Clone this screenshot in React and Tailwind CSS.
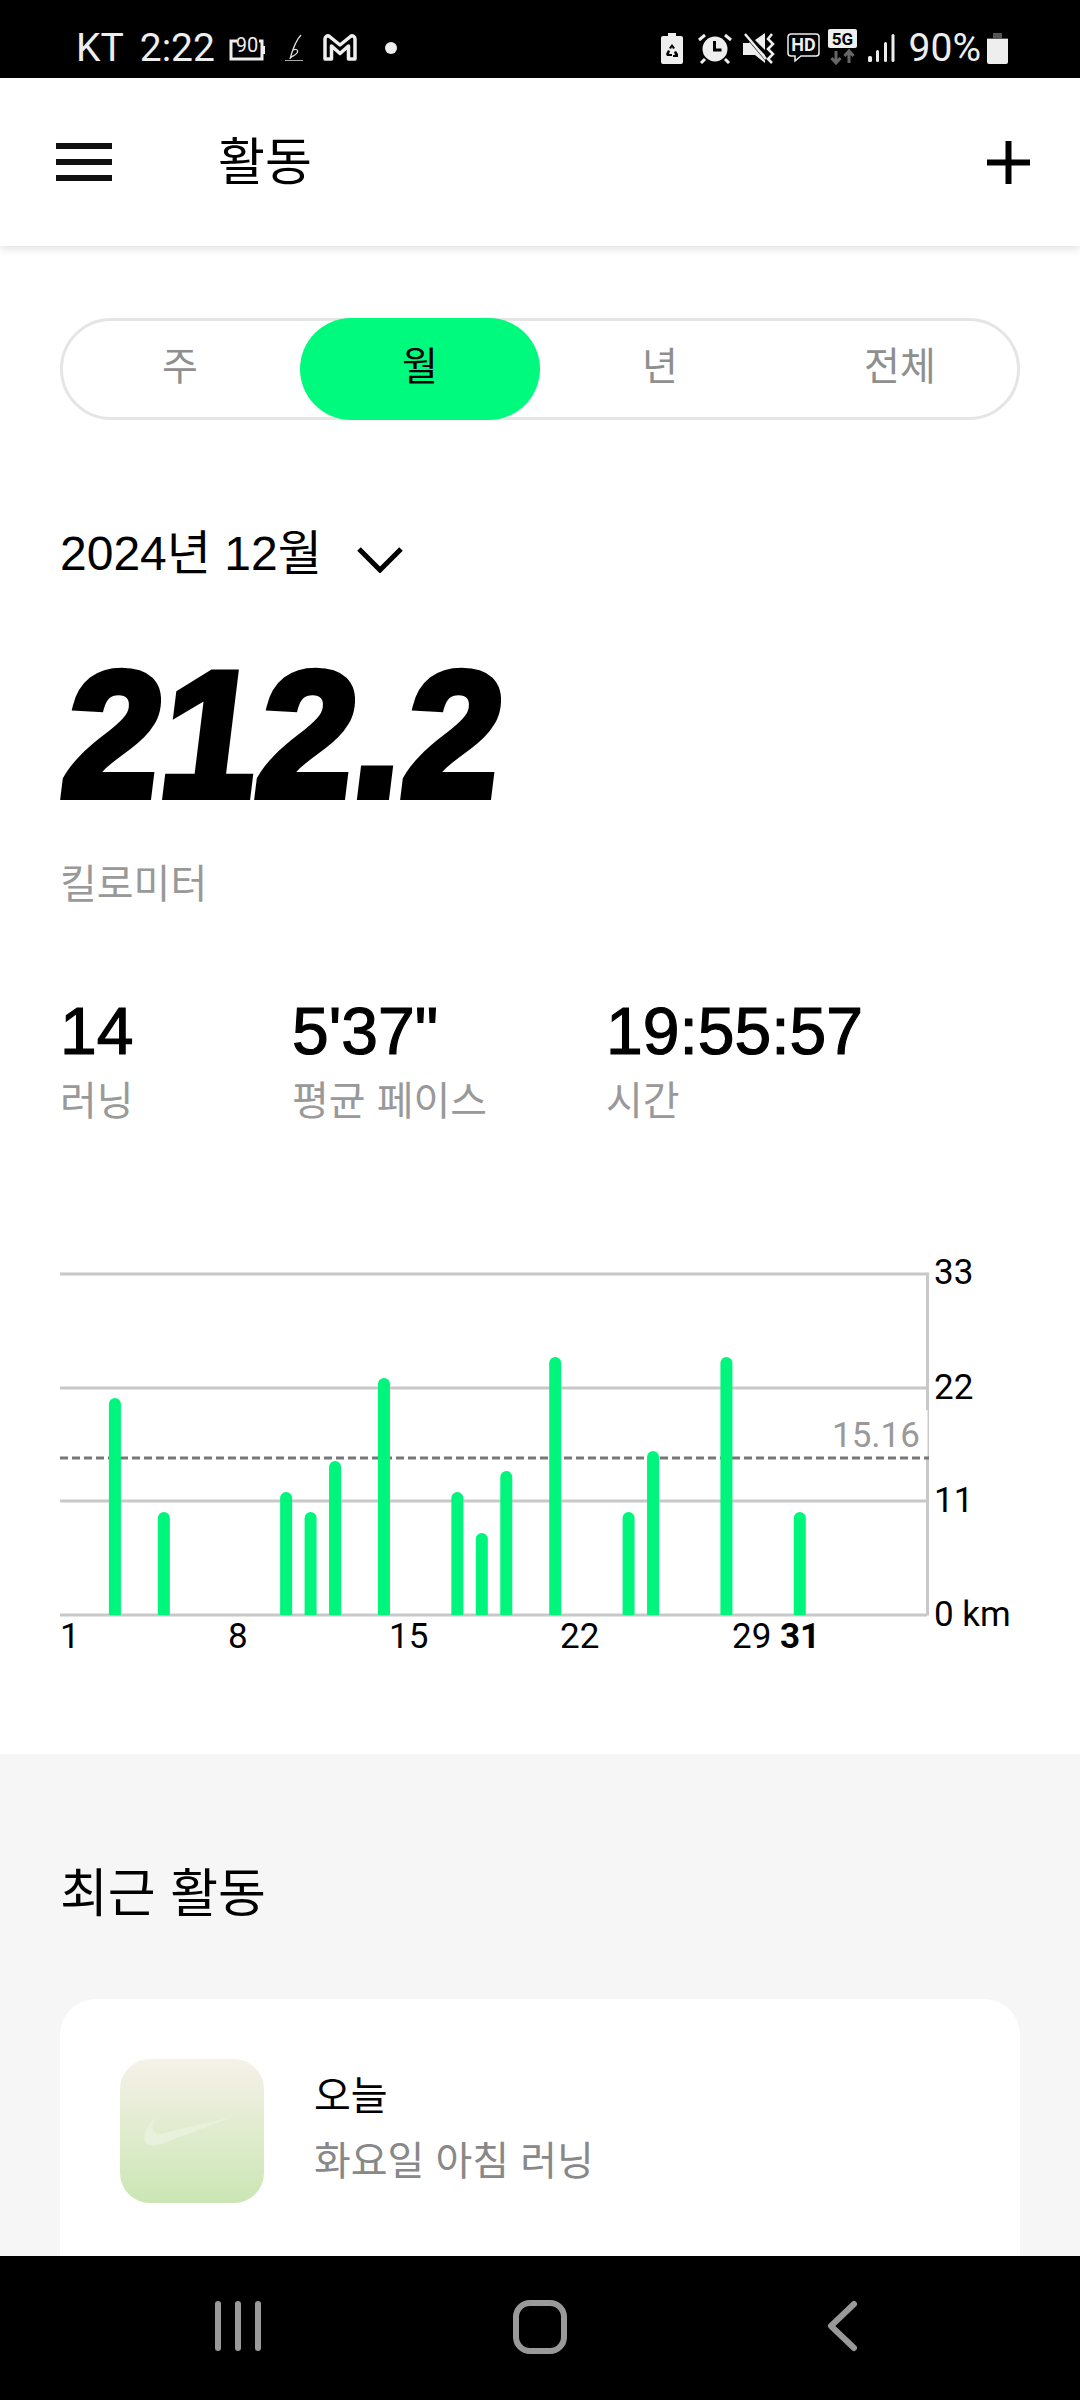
import React from 'react';

const bars = [
  { day: 3, top: 1398 }, { day: 5, top: 1512 }, { day: 10, top: 1492 }, { day: 11, top: 1512 },
  { day: 12, top: 1461 }, { day: 14, top: 1378 }, { day: 17, top: 1492 }, { day: 18, top: 1533 },
  { day: 19, top: 1471 }, { day: 21, top: 1357 }, { day: 24, top: 1512 }, { day: 25, top: 1451 },
  { day: 28, top: 1357 }, { day: 31, top: 1512 },
];

function BatteryLevel() {
  return (
    <svg width="37" height="26" viewBox="0 0 37 26" className="ml-[14px] overflow-visible">
      <path d="M8 6H2v18h31V6h-3" fill="none" stroke="#eee" strokeWidth="3" />
      <rect x="33" y="11" width="3" height="8" fill="#eee" />
      <text x="18" y="17" textAnchor="middle" fontSize="20" fill="#eee" fontFamily="Roboto, sans-serif">90</text>
    </svg>
  );
}

function PenIcon() {
  return (
    <svg width="20" height="28" viewBox="0 0 20 28" className="ml-[19px]">
      <path d="M16 1C12 5 8 14 5 25M7 17c4-3 7-1 5 2s-5 3-7 5" fill="none" stroke="#ddd" strokeWidth="1.3" />
      <path d="M0 26.5h18" stroke="#aaa" strokeWidth="1" />
    </svg>
  );
}

function MailIcon() {
  return (
    <svg width="34" height="28" viewBox="0 0 34 28" className="ml-[18px]">
      <path d="M2 25V5c0-2.500 2.500-4 4.500-2.500L17 11 27.500 2.500C29.500 1 32 2.500 32 5v20h-6.500V12L17 19.500 8.500 12v13z" fill="none" stroke="#eee" strokeWidth="3.500" strokeLinejoin="round" />
    </svg>
  );
}

function RecycleBattery() {
  return (
    <svg width="22" height="31" viewBox="0 0 22 31">
      <path d="M7 0h8v3h5a2 2 0 0 1 2 2v24a2 2 0 0 1-2 2H2a2 2 0 0 1-2-2V5a2 2 0 0 1 2-2h5z" fill="#eee" />
      <path d="M11 11l3 4-2 1-1-2-1 2-2-1zM5 21l2-4 2 1-1 3h3v2H6zM17 21l-2-3-2 1 1 3h-2v2h5z" fill="#000" />
    </svg>
  );
}

function AlarmIcon() {
  return (
    <svg width="34" height="31" viewBox="0 0 34 31" className="ml-[15px]">
      <circle cx="17" cy="16" r="12.500" fill="#eee" />
      <path d="M16.500 8v9h7" fill="none" stroke="#000" strokeWidth="3" />
      <path d="M1 7l6-5M33 7l-6-5M7 26l-4 4M27 26l4 4" stroke="#eee" strokeWidth="3" />
    </svg>
  );
}

function MuteIcon() {
  return (
    <svg width="33" height="31" viewBox="0 0 33 31" className="ml-[11px]">
      <path d="M0 10h6l2-2 14 14v8L12 22H0zM12 7l10-7v17z" fill="#eee" />
      <path d="M1 1l22 26" stroke="#000" strokeWidth="2" />
      <path d="M2 1l21 25" stroke="#eee" strokeWidth="2.500" />
      <path d="M29 1l-4 5 5 5-5 5 5 5-5 5 4 4" fill="none" stroke="#eee" strokeWidth="2.500" />
    </svg>
  );
}

function HdIcon() {
  return (
    <svg width="33" height="30" viewBox="0 0 33 30" className="ml-[11px]">
      <path d="M4 1h25a3 3 0 0 1 3 3v16a3 3 0 0 1-3 3H14l-6 5v-5H4a3 3 0 0 1-3-3V4a3 3 0 0 1 3-3z" fill="none" stroke="#eee" strokeWidth="1.500" />
      <text x="16.500" y="18" textAnchor="middle" fontSize="18" fontWeight="700" fill="#eee" fontFamily="Roboto, sans-serif">HD</text>
    </svg>
  );
}

function FiveGIcon() {
  return (
    <svg width="29" height="36" viewBox="0 0 29 36" className="ml-[8px] -mt-[2px]">
      <rect width="29" height="19" rx="2" fill="#eee" />
      <text x="14.500" y="16" textAnchor="middle" fontSize="17" fontWeight="700" fill="#000" fontFamily="Roboto, sans-serif">5G</text>
      <path d="M8 22v11M3.500 29l4.500 5 4.500-5M21 34V23M16.500 27l4.500-5 4.500 5" fill="none" stroke="#666" strokeWidth="3" />
    </svg>
  );
}

function SignalIcon() {
  return (
    <svg width="27" height="30" viewBox="0 0 27 30" className="ml-[11px]">
      <rect x="0" y="23" width="4" height="6" rx="1.500" fill="#eee" />
      <rect x="8" y="17" width="3" height="12" rx="1.500" fill="#eee" />
      <rect x="16" y="9" width="3" height="20" rx="1.500" fill="#eee" />
      <rect x="23.500" y="1" width="3" height="28" rx="1.500" fill="#eee" />
    </svg>
  );
}

function BatteryFull() {
  return (
    <svg width="21" height="31" viewBox="0 0 21 31" className="ml-[6px]">
      <path d="M6 0h9v5h6v5H0V5h6z" fill="#555" />
      <path d="M0 6h21v23a2 2 0 0 1-2 2H2a2 2 0 0 1-2-2z" fill="#eee" />
    </svg>
  );
}

function StatusBar() {
  return (
    <div className="h-[78px] shrink-0 bg-black flex items-center pl-[76px] pt-[18px] font-['Roboto',sans-serif] text-[#eeeeee]">
      <span className="text-[39px] leading-none">KT</span>
      <span className="text-[39px] leading-none ml-[16px]">2:22</span>
      <BatteryLevel />
      <PenIcon />
      <MailIcon />
      <div className="w-[12px] h-[12px] rounded-full bg-[#eeeeee] ml-[28px]" />
      <div className="ml-auto pr-[72px] flex items-center">
        <RecycleBattery />
        <AlarmIcon />
        <MuteIcon />
        <HdIcon />
        <FiveGIcon />
        <SignalIcon />
        <span className="text-[39px] leading-none ml-[14px]">90%</span>
        <BatteryFull />
      </div>
    </div>
  );
}

function Header() {
  return (
    <div className="h-[168px] shrink-0 bg-white flex items-center pl-[56px] pr-[50px] relative z-10 shadow-[0_3px_8px_rgba(0,0,0,0.12)]">
      <div className="flex flex-col gap-[10px] w-[56px]">
        <div className="h-[6px] bg-[#111111]" />
        <div className="h-[6px] bg-[#111111]" />
        <div className="h-[6px] bg-[#111111]" />
      </div>
      <div className="ml-[106px] text-[51px] leading-none text-black">활동</div>
      <svg width="43" height="43" viewBox="0 0 43 43" className="ml-auto">
        <path d="M21.500 0v43M0 21.500h43" stroke="#000" strokeWidth="6" />
      </svg>
    </div>
  );
}

function Tabs() {
  const tabs = ['주', '월', '년', '전체'];
  return (
    <div className="mx-[60px] mt-[72px] h-[102px] rounded-full border-[3px] border-[#e5e5e5] box-border">
      <div className="flex -m-[3px] h-[102px]">
        {tabs.map((t) => (
          <div
            key={t}
            className={t === '월'
              ? 'w-[240px] rounded-full bg-[#00fa7d] text-black flex items-center justify-center text-[39px] pb-[4px]'
              : 'w-[240px] text-[#8f8f8f] flex items-center justify-center text-[39px] pb-[4px]'}
          >
            {t}
          </div>
        ))}
      </div>
    </div>
  );
}

function Stat({ value, label, className }) {
  return (
    <div className={className}>
      <div className="text-[66px] leading-[64px] text-black [-webkit-text-stroke:1.2px_black]">{value}</div>
      <div className="text-[40px] leading-[50px] text-[#999999] mt-[13px]">{label}</div>
    </div>
  );
}

function Chart() {
  const originY = 1250;
  const y = (v) => v - originY;
  return (
    <svg width="1080" height="420" viewBox="0 0 1080 420" className="block mt-[124px]" fontFamily="Roboto, sans-serif">
      {[1274, 1388, 1501, 1615].map((l) => (
        <rect key={l} x="60" y={y(l) - 1.5} width="867" height="3" fill="#c8c8c8" />
      ))}
      <rect x="926" y={y(1274) - 1.500} width="3" height="343" fill="#c8c8c8" />
      <rect x="800" y={y(1410)} width="127.500" height="47" fill="#fff" />
      <line x1="60" x2="929" y1={y(1458)} y2={y(1458)} stroke="#777" strokeWidth="3" strokeDasharray="8 4" />
      {bars.map((b) => (
        <path
          key={b.day}
          d={`M${60 + (b.day - 1) * 24.46} ${y(1615)}V${y(b.top) + 6}a6 6 0 0 1 12 0V${y(1615)}z`}
          fill="#00f57d"
        />
      ))}
      <g fontSize="35" fill="#000">
        <text x="934" y={y(1284)}>33</text>
        <text x="934" y={y(1399)}>22</text>
        <text x="934" y={y(1512)}>11</text>
        <text x="934" y={y(1626)}>0 km</text>
        <text x="60" y={y(1648)}>1</text>
        <text x="228" y={y(1648)}>8</text>
        <text x="389" y={y(1648)}>15</text>
        <text x="560" y={y(1648)}>22</text>
        <text x="732" y={y(1648)}>29</text>
        <text x="780" y={y(1648)} fontWeight="700">31</text>
      </g>
      <text x="832" y={y(1447)} fontSize="35" fill="#999">15.16</text>
    </svg>
  );
}

function RecentCard() {
  return (
    <div className="mx-[60px] mt-[75px] h-[300px] bg-white rounded-[36px] pl-[60px] pt-[60px] flex">
      <div className="w-[144px] h-[144px] rounded-[30px] bg-gradient-to-b from-[#f6f1e9] to-[#cbe6b4]">
        <svg width="144" height="144" viewBox="0 0 144 144">
          <path d="M112 58L44 84C36 87 28 88 25 82C22 76 28 66 35 59C32 66 31 72 36 74C40 76 46 74 52 72Z" fill="#eaf3df" fillOpacity="0.8" />
        </svg>
      </div>
      <div className="ml-[50px]">
        <div className="text-[40px] leading-[50px] text-black mt-[12px]">오늘</div>
        <div className="text-[40px] leading-[50px] text-[#888888] mt-[15px]">화요일 아침 러닝</div>
      </div>
    </div>
  );
}

function NavBar() {
  return (
    <div className="h-[144px] shrink-0 bg-black flex items-center relative z-10">
      <svg width="1080" height="144" viewBox="0 0 1080 144">
        <path d="M218 48v44M238 48v44M258 48v44" stroke="#999" strokeWidth="6" strokeLinecap="round" />
        <rect x="516" y="47" width="48" height="48" rx="14" fill="none" stroke="#999" strokeWidth="6" />
        <path d="M854 48L831 70l23 22" fill="none" stroke="#999" strokeWidth="6" strokeLinecap="round" strokeLinejoin="round" />
      </svg>
    </div>
  );
}

export default function App() {
  return (
    <div className="w-[1080px] h-[2400px] flex flex-col overflow-hidden bg-white font-['Liberation_Sans','Noto_Sans_CJK_KR',sans-serif]">
      <StatusBar />
      <Header />
      <div className="flex-1 min-h-0 overflow-hidden">
        <Tabs />
        <div className="px-[60px] mt-[104px] flex items-center h-[60px]">
          <span className="text-[48px] leading-none text-black">2024년 12월</span>
          <svg width="46" height="26" viewBox="0 0 46 26" className="ml-[35px] mt-[11px]">
            <path d="M2 2l21 21L44 2" fill="none" stroke="#000" strokeWidth="5" />
          </svg>
        </div>
        <div className="pl-[68px] mt-[76px] h-[150px] text-[178px] leading-[150px] font-bold text-black tracking-[1px] [-webkit-text-stroke:8px_black] origin-left [transform:skewX(-7deg)_scaleX(0.97)]">212.2</div>
        <div className="pl-[60px] mt-[49px] text-[40px] leading-[50px] text-[#999999]">킬로미터</div>
        <div className="pl-[60px] mt-[90px] flex">
          <Stat value="14" label="러닝" className="w-[232px]" />
          <Stat value={'5\'37"'} label="평균 페이스" className="w-[314px]" />
          <Stat value="19:55:57" label="시간" />
        </div>
        <Chart />
        <div className="bg-[#f6f6f6] h-[600px] mt-[84px] pt-[110px]">
          <div className="pl-[60px] text-[52px] leading-[60px] text-black">최근 활동</div>
          <RecentCard />
        </div>
      </div>
      <NavBar />
    </div>
  );
}
